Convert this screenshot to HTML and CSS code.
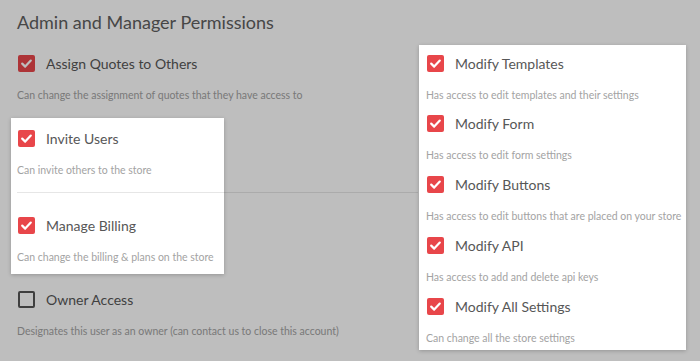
FILE: index.html
```html
<!DOCTYPE html>
<html lang="en">
<head>
    <meta charset="UTF-8">
    <meta name="viewport" content="width=device-width, initial-scale=1.0">
    <title>Permissions</title>
    <link rel="stylesheet" href="styles.css">
</head>
<body>

<div class="page">
    <h2 class="title">Admin and Manager Permissions</h2>

    <div class="columns">
        <div class="col-left">
            <div class="perm">
                <label class="perm-head">
                    <span class="check on"><svg viewBox="0 0 17 17"><path d="M4.2 8.6l3 3 5.6-6"/></svg></span>
                    Assign Quotes to Others
                </label>
                <p class="perm-desc">Can change the assignment of quotes that they have access to</p>
            </div>

            <div class="perm">
                <label class="perm-head">
                    <span class="check on"><svg viewBox="0 0 17 17"><path d="M4.2 8.6l3 3 5.6-6"/></svg></span>
                    Invite Users
                </label>
                <p class="perm-desc">Can invite others to the store</p>
            </div>

            <hr class="divider">

            <div class="perm">
                <label class="perm-head">
                    <span class="check on"><svg viewBox="0 0 17 17"><path d="M4.2 8.6l3 3 5.6-6"/></svg></span>
                    Manage Billing
                </label>
                <p class="perm-desc">Can change the billing &amp; plans on the store</p>
            </div>

            <div class="perm">
                <label class="perm-head">
                    <span class="check"></span>
                    Owner Access
                </label>
                <p class="perm-desc">Designates this user as an owner (can contact us to close this account)</p>
            </div>
        </div>

        <div class="col-right">
            <div class="perm">
                <label class="perm-head">
                    <span class="check on"><svg viewBox="0 0 17 17"><path d="M4.2 8.6l3 3 5.6-6"/></svg></span>
                    Modify Templates
                </label>
                <p class="perm-desc">Has access to edit templates and their settings</p>
            </div>
            <div class="perm">
                <label class="perm-head">
                    <span class="check on"><svg viewBox="0 0 17 17"><path d="M4.2 8.6l3 3 5.6-6"/></svg></span>
                    Modify Form
                </label>
                <p class="perm-desc">Has access to edit form settings</p>
            </div>
            <div class="perm">
                <label class="perm-head">
                    <span class="check on"><svg viewBox="0 0 17 17"><path d="M4.2 8.6l3 3 5.6-6"/></svg></span>
                    Modify Buttons
                </label>
                <p class="perm-desc">Has access to edit buttons that are placed on your store</p>
            </div>
            <div class="perm">
                <label class="perm-head">
                    <span class="check on"><svg viewBox="0 0 17 17"><path d="M4.2 8.6l3 3 5.6-6"/></svg></span>
                    Modify API
                </label>
                <p class="perm-desc">Has access to add and delete api keys</p>
            </div>
            <div class="perm">
                <label class="perm-head">
                    <span class="check on"><svg viewBox="0 0 17 17"><path d="M4.2 8.6l3 3 5.6-6"/></svg></span>
                    Modify All Settings
                </label>
                <p class="perm-desc">Can change all the store settings</p>
            </div>
        </div>
    </div>
</div>

<!-- tour overlay: darkens the page with two cut-out windows -->
<svg class="tour-mask" viewBox="0 0 700 361" preserveAspectRatio="none">
    <path fill-rule="evenodd" d="M0 0H700V361H0Z M11 118V274H224V118Z M419 45V350H686V45Z"/>
</svg>
<div class="spot spot-left"></div>
<div class="spot spot-right"></div>

</body>
</html>
```

FILE: styles.css
```css
body {
    margin: 0;
    background-color: #fff;
    font-family: Lato, "Noto Sans", sans-serif;
    color: #555;
}

.page {
    padding: 10px 17px 0 17px;
}

.title {
    margin: 0 0 19px 0;
    font-size: 18px;
    line-height: 24px;
    font-weight: normal;
    color: #606060;
}

.columns {
    display: grid;
    grid-template-columns: 401px 1fr;
    column-gap: 8px;
}

.perm-head {
    display: flex;
    align-items: center;
    height: 20px;
    font-size: 14px;
    color: #575757;
}

.perm-desc {
    margin: 14px 0 0 0;
    font-size: 10.5px;
    line-height: 16px;
    color: #a3a3a3;
    white-space: nowrap;
}

.col-left .perm + .perm {
    margin-top: 25px;
}

.col-left .perm:last-child {
    margin-top: 24px;
}

.col-right .perm + .perm {
    margin-top: 11.25px;
}

.col-right .perm-desc {
    margin-top: 13.5px;
}

.divider {
    border: none;
    border-top: 1px solid #e6e6e6;
    margin: 14px 0 22px 0;
}

.check {
    box-sizing: border-box;
    width: 17px;
    height: 17px;
    margin: 0 11px 0 1px;
    border: 2px solid #555;
    border-radius: 2px;
    flex-shrink: 0;
}

.check.on {
    background-color: #e8464a;
    border: none;
}

.check svg {
    display: block;
    width: 17px;
    height: 17px;
}

.check svg path {
    fill: none;
    stroke: #fff;
    stroke-width: 2.2;
    stroke-linecap: round;
    stroke-linejoin: round;
}

.tour-mask {
    position: absolute;
    top: 0;
    left: 0;
    width: 700px;
    height: 361px;
}

.tour-mask path {
    fill: rgba(0, 0, 0, 0.255);
}

.spot {
    position: absolute;
    box-shadow: 0 1px 4px rgba(0, 0, 0, 0.22);
}

.spot-left {
    left: 11px;
    top: 118px;
    width: 213px;
    height: 156px;
}

.spot-right {
    left: 419px;
    top: 45px;
    width: 267px;
    height: 305px;
}
```
